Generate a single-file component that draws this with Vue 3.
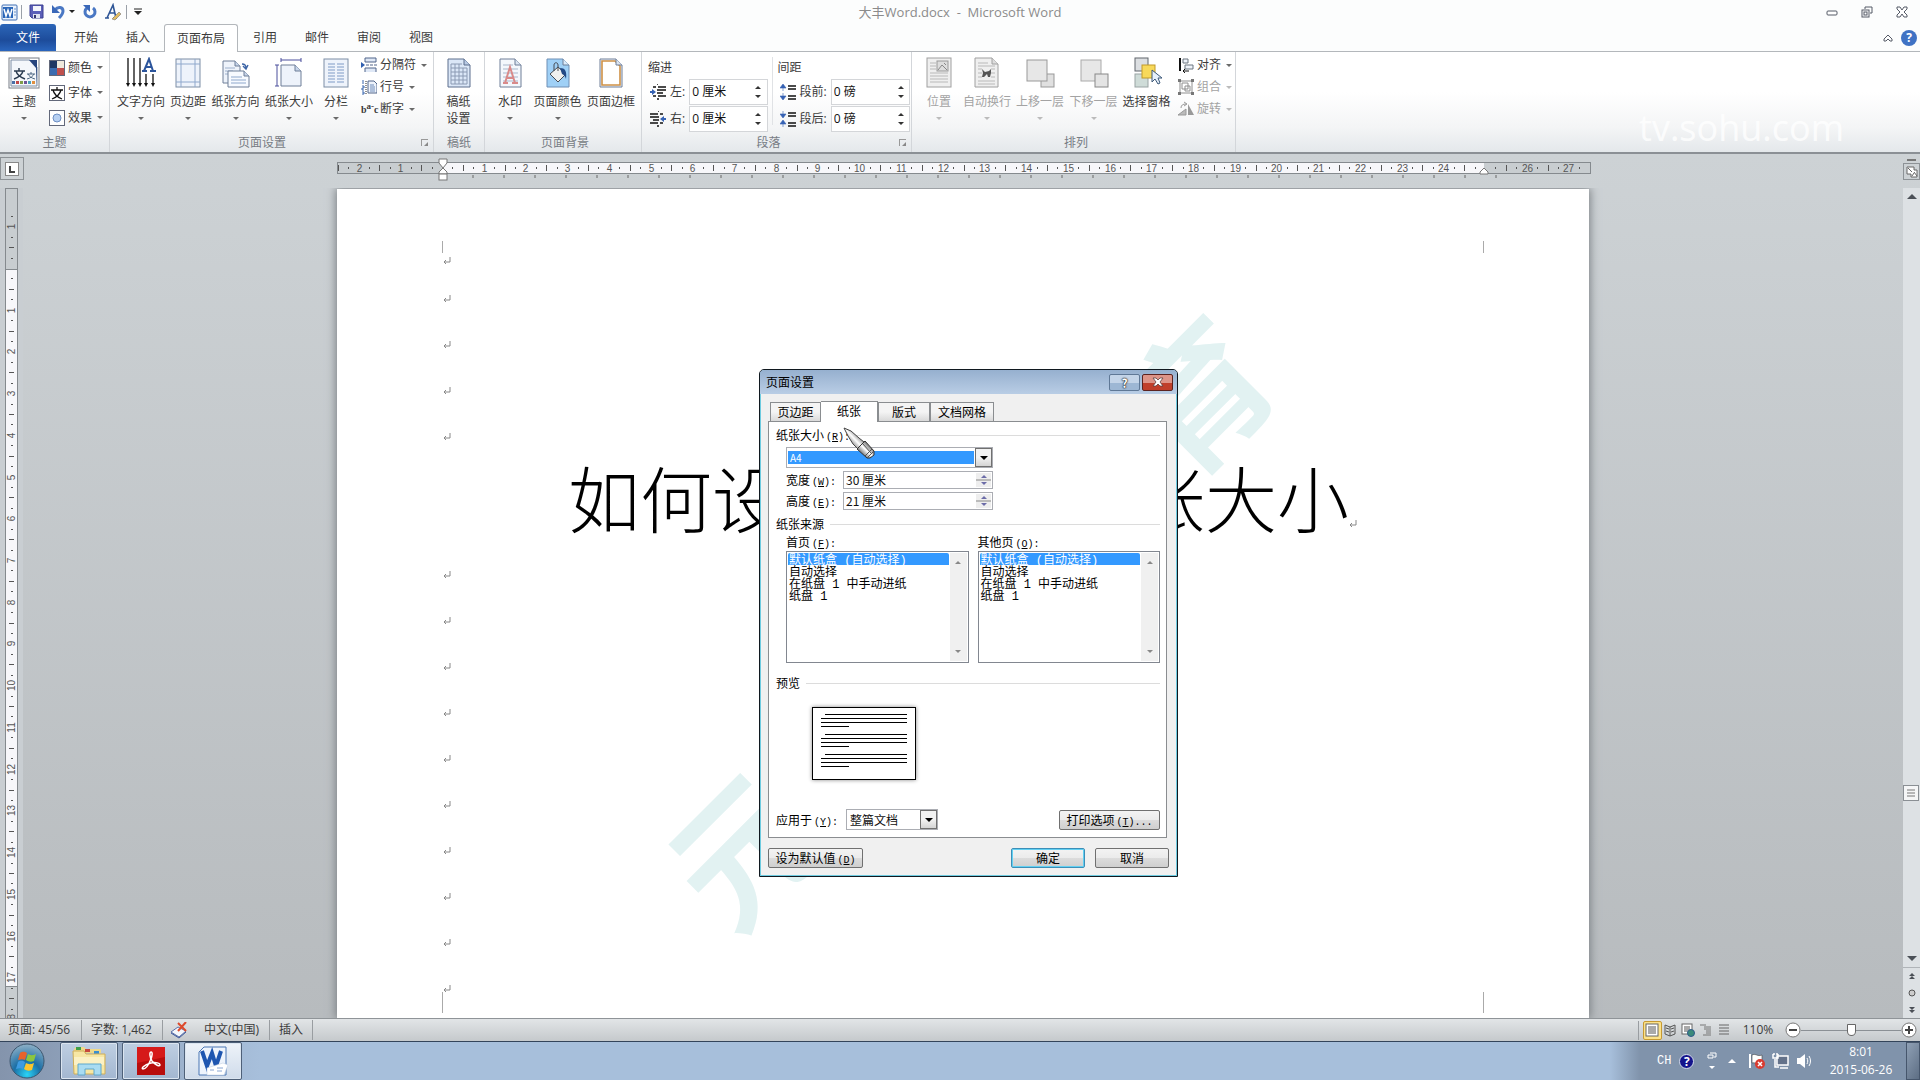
<template>
  <div class="app">
    <header class="title-bar">
      <div class="quick">
        <svg width="17" height="17" viewBox="0 0 17 17">
          <rect x="1" y="1" width="15" height="15" rx="1" fill="#eaf2fc" stroke="#3f6fb4" />
          <rect x="2" y="3" width="10" height="11" fill="#2a66b8" />
          <path d="M3 5l2 7 2-6 2 6 2-7" fill="none" stroke="#fff" stroke-width="1.5" />
          <path d="M13 5h2M13 8h2M13 11h2" stroke="#6d93c8" />
        </svg>
        <i class="bar"></i>
        <button class="q" aria-label="保存">
          <svg width="16" height="16" viewBox="0 0 16 16">
            <path d="M1 1h13v13H3l-2-2z" fill="#5b5fb8" stroke="#3b3f90" />
            <rect x="4" y="2" width="8" height="5" fill="#f3f5fb" />
            <rect x="4" y="10" width="7" height="4" fill="#dfe2f0" />
            <rect x="5" y="11" width="2" height="3" fill="#33366e" />
          </svg>
        </button>
        <button class="q undo" aria-label="撤消">
          <svg width="24" height="16" viewBox="0 0 24 16">
            <path d="M4 6c3-4 8-3 8 1 0 3-2 5-4 7" fill="none" stroke="#4a78c4" stroke-width="3" />
            <path d="M1 1v8h8z" fill="#3a68b8" />
            <path d="M18 6h6l-3 3z" fill="#222" />
          </svg>
        </button>
        <button class="q" aria-label="恢复">
          <svg width="16" height="16" viewBox="0 0 16 16">
            <path d="M5 4a5 5 0 1 0 6 0" fill="none" stroke="#4a78c4" stroke-width="3" />
            <path d="M1 1h7v7z" fill="#3a68b8" />
          </svg>
        </button>
        <button class="q last" aria-label="格式">
          <svg width="18" height="18" viewBox="0 0 18 18">
            <path d="M1 15h4M9 15h4M3 15L9 2l3 13M5 10h6" fill="none" stroke="#2e5596" stroke-width="1.6" />
            <path d="M8 16l7-7 2 2-6 6z" fill="#e2bd63" stroke="#777" stroke-width=".6" />
          </svg>
        </button>
        <i class="bar"></i>
        <svg width="8" height="8" viewBox="0 0 8 8"><path d="M0 1h8" stroke="#222" /><path d="M0 3h8L4 7z" fill="#222" /></svg>
      </div>
      <h1>大丰Word.docx&nbsp; - &nbsp;Microsoft Word</h1>
      <div class="win">
        <button aria-label="最小化"><svg width="12" height="12" viewBox="0 0 12 12"><rect x="1" y="5" width="10" height="4" rx="1" fill="#fff" stroke="#555a66" /></svg></button>
        <button aria-label="还原"><svg width="12" height="12" viewBox="0 0 12 12"><path d="M4 1h7v6H9M4 3V1" fill="none" stroke="#555a66" /><rect x="1" y="4" width="7" height="7" fill="#fff" stroke="#555a66" /><rect x="3" y="6" width="3" height="3" fill="none" stroke="#555a66" /></svg></button>
        <button aria-label="关闭"><svg width="12" height="12" viewBox="0 0 12 12"><path d="M1 1h3l2 3 2-3h3v2L8 6l3 3v2H8L6 8l-2 3H1V9l3-3-3-3z" fill="#fff" stroke="#555a66" /></svg></button>
      </div>
    </header>

    <nav class="tabs">
      <button class="file">文件</button>
      <button v-for="t in tabs" :key="t" :class="['tab', { active: t === '页面布局' }]">{{ t }}</button>
      <span class="grow"></span>
      <button class="collapse" aria-label="折叠功能区"><svg width="10" height="8" viewBox="0 0 10 8"><path d="M1 5l4-4 4 4v2H7L5 5 3 7H1z" fill="#fff" stroke="#555a66" /></svg></button>
      <button class="help">?</button>
    </nav>

    <section class="ribbon">
      <div class="group g-theme">
        <div class="tools">
          <button class="big w48">
            <svg width="32" height="32" viewBox="0 0 32 32">
              <rect x="1" y="1" width="30" height="30" fill="#fff" stroke="#777d85" />
              <path d="M3 3h19l7 7v19H3z" fill="#f4f7fb" stroke="#7d8ea5" />
              <path d="M21 3h8v26l-1-18z" fill="#28457d" />
              <path d="M6 14h11M11 11v3M8 14c1 4 4 6 9 8M15 14c-1 4-4 6-9 8" fill="none" stroke="#2a3b50" stroke-width="1.4" />
              <path d="M19 17h8M23 15v2M20 17c1 2 3 4 7 5M26 17c-1 2-3 4-7 5" fill="none" stroke="#4a6580" />
              <path d="M4 24h3v3H4z" fill="#4a6fa8" /><path d="M8 24h3v3H8z" fill="#c04848" /><path d="M12 24h3v3h-3z" fill="#7f9d48" /><path d="M16 24h3v3h-3z" fill="#6f5596" /><path d="M20 24h3v3h-3z" fill="#4aa0b8" /><path d="M24 24h3v3h-3z" fill="#e09040" />
            </svg>
            <span>主题</span><i class="arrow"></i>
          </button>
          <div class="smalls loose">
            <button class="small">
              <svg width="16" height="16" viewBox="0 0 16 16"><path d="M0 0h8v8H0z" fill="#1f3864" /><path d="M8 0h8v8H8z" fill="#efe9dc" /><path d="M0 8h8v8H0z" fill="#3b6cb0" /><path d="M8 8h8v8H8z" fill="#c0504d" /><rect x=".5" y=".5" width="15" height="15" fill="none" stroke="#62687a" /></svg>
              颜色<i class="arrow"></i>
            </button>
            <button class="small">
              <svg width="16" height="16" viewBox="0 0 16 16"><rect x=".5" y=".5" width="15" height="15" fill="#fff" stroke="#62687a" /><path d="M2 5h12M8 2v3M4 5c1 4 4 7 9 9M12 5c-1 4-4 7-9 9" fill="none" stroke="#111" stroke-width="1.3" /></svg>
              字体<i class="arrow"></i>
            </button>
            <button class="small">
              <svg width="16" height="16" viewBox="0 0 16 16"><rect x=".5" y=".5" width="15" height="15" fill="#fff" stroke="#62687a" /><circle cx="8" cy="8" r="4" fill="#b7d0f2" stroke="#6d8fc4" /></svg>
              效果<i class="arrow"></i>
            </button>
          </div>
        </div>
        <div class="caption">主题</div>
      </div>

      <div class="group g-setup">
        <div class="tools">
          <button class="big w52">
            <svg width="32" height="32" viewBox="0 0 32 32">
              <path d="M3 1v27M9 1v27M15 1v27M21 17v11M28 17v11" stroke="#111" stroke-width="1.3" />
              <path d="M1 26h4l-2 4zM7 26h4l-2 4zM13 26h4l-2 4zM19 26h4l-2 4zM26 26h4l-2 4z" fill="#111" />
              <path d="M17 14h5M25 14h6M19 14l5-12 4 12M21 10h6" fill="none" stroke="#2c559c" stroke-width="2" />
            </svg>
            <span>文字方向</span><i class="arrow"></i>
          </button>
          <button class="big w42">
            <svg width="32" height="32" viewBox="0 0 32 32"><rect x="4" y="2" width="24" height="28" fill="#eef3fb" stroke="#7d8ea5" /><path d="M9 2v28M23 2v28M4 7h24M4 25h24" stroke="#8fa8cc" /></svg>
            <span>页边距</span><i class="arrow"></i>
          </button>
          <button class="big w53">
            <svg width="32" height="32" viewBox="0 0 32 32"><path d="M3 4h12l5 5v17H3z" fill="#eef3fb" stroke="#6f7f98" /><path d="M15 4v5h5" fill="#c7d5ea" stroke="#6f7f98" /><path d="M5 11h10M5 14h8M5 17h3" stroke="#9db0cc" /><path d="M8 14h16l5 5v11H8z" fill="#f7faff" stroke="#6f7f98" /><path d="M24 14v5h5" fill="#c7d5ea" stroke="#6f7f98" /><path d="M11 20h11M11 23h15M11 26h15" stroke="#8fa8cc" /><path d="M22 7c3 0 4 2 4 4M23 9l3 3 2-4" fill="none" stroke="#3c64a6" stroke-width="1.4" /></svg>
            <span>纸张方向</span><i class="arrow"></i>
          </button>
          <button class="big w54">
            <svg width="32" height="32" viewBox="0 0 32 32"><path d="M8 8h14l6 6v15H8z" fill="#eef3fb" stroke="#6f7f98" /><path d="M22 8v6h6" fill="#c7d5ea" stroke="#6f7f98" /><path d="M8 3h20M8 1v4M28 1v4M4 8v21M2 8h4M2 29h4" stroke="#4a4f9c" /></svg>
            <span>纸张大小</span><i class="arrow"></i>
          </button>
          <button class="big w40">
            <svg width="32" height="32" viewBox="0 0 32 32"><rect x="4" y="2" width="24" height="28" fill="#eef3fb" stroke="#7d8ea5" /><path v-for="n in 7" :key="n" :d="`M8 ${4 + n * 3}h7M17 ${4 + n * 3}h7`" stroke="#7f9bc6" /></svg>
            <span>分栏</span><i class="arrow"></i>
          </button>
          <div class="smalls">
            <button class="small">
              <svg width="16" height="16" viewBox="0 0 16 16"><path d="M4 1h11v4H4zM4 15v-4h11v4" fill="#dfe8f6" stroke="#51658a" /><path d="M5 8h11" stroke="#51658a" stroke-dasharray="3 1" /><path d="M0 5l4 3-4 3z" fill="#2f5fb0" /></svg>
              分隔符<i class="arrow"></i>
            </button>
            <button class="small">
              <svg width="16" height="16" viewBox="0 0 16 16"><path d="M2 1v4M1 7h2v2H1v2h2M1 13h2v2H1" fill="none" stroke="#3562ac" /><path d="M5 2v13" stroke="#222" stroke-dasharray="1 1" /><path d="M7 2h6l3 3v9H7z" fill="#eef3fb" stroke="#51658a" /><path d="M9 6h4M9 8h5M9 10h5M9 12h5" stroke="#6f8cba" /></svg>
              行号<i class="arrow"></i>
            </button>
            <button class="small">
              <span class="hyph">b<sup>a-</sup>c</span>
              断字<i class="arrow"></i>
            </button>
          </div>
        </div>
        <div class="caption">页面设置<i class="launch"></i></div>
      </div>

      <div class="group g-grid">
        <div class="tools">
          <button class="big w49">
            <svg width="32" height="32" viewBox="0 0 32 32"><path d="M5 2h16l6 6v22H5z" fill="#dbe7f7" stroke="#5d6f8d" /><path d="M21 2v6h6" fill="#b9cbe5" stroke="#5d6f8d" /><path d="M8 7h11M8 11h16M8 15h16M8 19h16M8 23h16M8 27h16M8 7v20M12 7v20M16 7v20M20 11v16M24 11v16" stroke="#8b9ab3" /></svg>
            <span>稿纸<br>设置</span>
          </button>
        </div>
        <div class="caption">稿纸</div>
      </div>

      <div class="group g-back">
        <div class="tools">
          <button class="big w42">
            <svg width="32" height="32" viewBox="0 0 32 32"><path d="M6 2h15l6 6v22H6z" fill="#f4f7fc" stroke="#6f7f98" /><path d="M21 2v6h6" fill="#dbe4f1" stroke="#6f7f98" /><path d="M9 8h10M9 12h15M9 16h15M9 20h15M9 24h15" stroke="#a9b7cc" /><path d="M9 26h5M18 26h6M11 26l5-16 5 16M13 21h6" fill="none" stroke="#d98a8a" stroke-width="2" /></svg>
            <span>水印</span><i class="arrow"></i>
          </button>
          <button class="big w53">
            <svg width="32" height="32" viewBox="0 0 32 32"><path d="M5 2h16l6 6v22H5z" fill="#9fd0f6" stroke="#6f8fb5" /><path d="M21 2v6h6" fill="#dcebf9" stroke="#6f7f98" /><path d="M8 17l8-7 8 7-8 8z" fill="#f0f0ee" stroke="#474b52" /><path d="M12 14V8c0-3 4-3 4 0v6" fill="none" stroke="#474b52" /><path d="M18 11c5 0 7 3 6 11-1-3-2-4-4-5z" fill="#234a86" /></svg>
            <span>页面颜色</span><i class="arrow"></i>
          </button>
          <button class="big w54">
            <svg width="32" height="32" viewBox="0 0 32 32"><path d="M5 2h16l6 6v22H5z" fill="#eef3fb" stroke="#6f7f98" /><path d="M7 4h13l5 5v19H7z" fill="#fff" stroke="#cf9145" stroke-width="1.6" /><path d="M21 2v6h6" fill="#dbe4f1" stroke="#6f7f98" /></svg>
            <span>页面边框</span>
          </button>
        </div>
        <div class="caption">页面背景</div>
      </div>

      <div class="group g-para">
        <div class="tools">
          <div class="measures indent">
            <div class="head">缩进</div>
            <div v-for="m in indents" :key="m.label" class="measure">
              <svg width="16" height="16" viewBox="0 0 16 16">
                <g :transform="m.flip ? 'matrix(-1 0 0 1 16 0)' : ''">
                  <path d="M3 3h3M8 3h8M7 6h9M7 9h6M3 12h3M8 12h8M7 15h2M7 0h1" stroke="#111" stroke-width="1.5" />
                  <path d="M0 7h2V5l4 3-4 3V9H0z" fill="#3562b4" />
                </g>
              </svg>
              <label :for="m.id">{{ m.label }}</label>
              <div class="spin"><input :id="m.id" v-model="m.value"><span class="steps"><button aria-label="增大"></button><button class="down" aria-label="减小"></button></span></div>
            </div>
          </div>
          <div class="measures spacing">
            <div class="head">间距</div>
            <div v-for="m in spacings" :key="m.label" class="measure">
              <svg width="16" height="16" viewBox="0 0 16 16">
                <path d="M8 2h8M8 5h8M8 12h8M8 15h8" stroke="#111" stroke-width="1.3" />
                <path v-if="m.flip" d="M3 0v3M3 16v-3M0 3h6L3 7zM0 13h6l-3-4z" fill="#3562b4" stroke="#3562b4" stroke-width=".6" />
                <path v-else d="M3 4v3M3 9v3M0 4h6L3 0zM0 12h6l-3 4z" fill="#3562b4" stroke="#3562b4" stroke-width=".6" />
              </svg>
              <label :for="m.id">{{ m.label }}</label>
              <div class="spin"><input :id="m.id" v-model="m.value"><span class="steps"><button aria-label="增大"></button><button class="down" aria-label="减小"></button></span></div>
            </div>
          </div>
        </div>
        <div class="caption">段落<i class="launch"></i></div>
      </div>

      <div class="group g-arrange">
        <div class="tools">
          <button class="big w44" disabled>
            <svg width="32" height="32" viewBox="0 0 32 32"><rect x="4" y="1" width="24" height="29" fill="#efefef" stroke="#a0a0a0" /><path d="M7 6h6M7 9h6M7 12h6M7 16h18M7 19h18M7 22h18M7 25h18" stroke="#b9b9b9" /><rect x="14" y="4" width="11" height="10" fill="#ddd" stroke="#999" /><path d="M15 13l4-5 5 5M21 6l2 2" fill="none" stroke="#888" /></svg>
            <span>位置</span><i class="arrow"></i>
          </button>
          <button class="big w52" disabled>
            <svg width="32" height="32" viewBox="0 0 32 32"><path d="M4 1h17l6 6v23H4z" fill="#efefef" stroke="#a0a0a0" /><path d="M21 1v6h6" fill="#ddd" stroke="#a0a0a0" /><path d="M7 6h10M7 9h17M7 12h4M20 12h4M7 16h4M20 16h4M7 20h4M20 20h4M7 24h17M7 27h17" stroke="#b9b9b9" /><path d="M11 12l3 3 4-1 2-2v4l-1 4h-2l-1-3-3 3h-2l1-4z" fill="#555" /></svg>
            <span>自动换行</span><i class="arrow"></i>
          </button>
          <button class="big w54" disabled>
            <svg width="32" height="32" viewBox="0 0 32 32"><rect x="17" y="17" width="13" height="13" fill="#e0e0e0" stroke="#999" /><rect x="3" y="3" width="20" height="21" fill="#e7e7e7" stroke="#999" /></svg>
            <span>上移一层</span><i class="arrow"></i>
          </button>
          <button class="big w53" disabled>
            <svg width="32" height="32" viewBox="0 0 32 32"><rect x="3" y="3" width="20" height="21" fill="#e7e7e7" stroke="#aaa" /><rect x="17" y="17" width="13" height="13" fill="#e4e4e4" stroke="#888" /></svg>
            <span>下移一层</span><i class="arrow"></i>
          </button>
          <button class="big w53">
            <svg width="32" height="32" viewBox="0 0 32 32"><rect x="4" y="1" width="13" height="13" fill="#dcdfe2" stroke="#61666c" /><rect x="4" y="17" width="13" height="13" fill="#cfdcd8" stroke="#9aa4a4" /><rect x="11" y="8" width="13" height="13" fill="#f8d95a" stroke="#c19a2a" /><path d="M21 13v12l3-3 3 5 2-1-2-5h4z" fill="#e6f0fb" stroke="#3c5878" /></svg>
            <span>选择窗格</span>
          </button>
          <div class="smalls">
            <button class="small"><svg width="16" height="16" viewBox="0 0 16 16"><path d="M2 1v13" stroke="#111" stroke-width="2" /><path d="M5 2h5v4H5zM7 8h8v4H7z" fill="#eef2f8" stroke="#6d7680" /><path d="M5 14h6M7 12l-2 2 2 2" fill="none" stroke="#111" /></svg>对齐<i class="arrow"></i></button>
            <button class="small" disabled><svg width="16" height="16" viewBox="0 0 16 16"><path d="M2 2h12v12H2zM4 4h6v6H4zM7 7h5v5H7z" fill="none" stroke="#8f8f8f" /><path d="M0 0h3v3H0zM13 0h3v3h-3zM0 13h3v3H0zM13 13h3v3h-3z" fill="#777" /></svg>组合<i class="arrow"></i></button>
            <button class="small" disabled><svg width="16" height="16" viewBox="0 0 16 16"><path d="M0 14h8V8z" fill="#bbb" stroke="#999" /><path d="M10 14h6L10 3z" fill="#999" /><path d="M3 7c0-3 2-4 5-4M6 1l3 2-3 2" fill="none" stroke="#999" /></svg>旋转<i class="arrow"></i></button>
          </div>
        </div>
        <div class="caption">排列</div>
      </div>
      <div class="brand">tv.sohu.com</div>
    </section>

    <main class="workspace">
      <div class="corner"><button aria-label="制表符"><svg width="12" height="12" viewBox="0 0 12 12"><path d="M4 3v6h5" fill="none" stroke="#444" stroke-width="2" /></svg></button></div>
      <div class="ruler-row">
        <svg class="ruler" width="1254" height="24" viewBox="0 0 1254 24">
          <rect x=".5" y="5.500" width="1253" height="11" fill="#c8cdd0" stroke="#858a8e" />
          <rect x="106" y="6" width="1041" height="10" fill="#f7f7fa" />
          <template v-for="n in 120" :key="n">
            <path v-if="hTick(n).kind === 'half'" :d="`M${hTick(n).x} 8v6`" stroke="#555" />
            <path v-if="hTick(n).kind === 'dot'" :d="`M${hTick(n).x} 10v2`" stroke="#555" />
            <text v-if="hTick(n).kind === 'num'" :x="hTick(n).x" y="15" text-anchor="middle">{{ hTick(n).text }}</text>
          </template>
          <path v-for="n in 34" :key="'t' + n" :d="`M${105 + n * 31} 18v3`" stroke="#666" />
          <path d="M102 2h8v4l-4 5-4-5zM102 17v-2l4-4 4 4v2z" fill="#fff" stroke="#777" />
          <rect x="102" y="17" width="8" height="6" fill="#fff" stroke="#777" />
          <path d="M1143 17v-2l4-4 4 4v2z" fill="#fff" stroke="#777" />
        </svg>
      </div>
      <div class="split">
        <i></i>
        <button aria-label="标尺"><svg width="14" height="14" viewBox="0 0 14 14"><path d="M2 2h7v3h3v7H6V9H2z" fill="#fff" stroke="#666" /><path d="M3 3l4 4M9 7l3 4M7 11l2-3" stroke="#666" /></svg></button>
      </div>

      <div class="side">
        <svg class="v-ruler" width="18" height="834" viewBox="0 0 18 834">
          <rect x="5.500" y=".5" width="12" height="840" fill="#c8cdd0" stroke="#858a8e" />
          <rect x="6" y="82" width="11" height="716" fill="#f7f7fa" />
          <path d="M6 81.500h11M6 798.500h11" stroke="#858a8e" />
          <template v-for="n in 80" :key="n">
            <path v-if="vTick(n).kind === 'half'" :d="`M9 ${vTick(n).y}h5`" stroke="#555" />
            <path v-if="vTick(n).kind === 'dot'" :d="`M11 ${vTick(n).y}h2`" stroke="#555" />
            <text v-if="vTick(n).kind === 'num'" text-anchor="middle" :transform="`translate(15 ${vTick(n).y}) rotate(-90)`">{{ vTick(n).text }}</text>
          </template>
        </svg>
      </div>
      <div class="canvas">
        <article class="page">
          <div class="mark-text" aria-hidden="true"><span>元</span><span>育</span></div>
          <i class="crop tl"></i><i class="crop tr"></i><i class="crop bl"></i><i class="crop br"></i>
          <p class="first"><svg class="ret" viewBox="0 0 8 8"><path d="M7 0v5H1M3 3L1 5l2 2" /></svg></p>
          <p v-for="n in 4" :key="n"><svg class="ret" viewBox="0 0 8 8"><path d="M7 0v5H1M3 3L1 5l2 2" /></svg></p>
          <h2><span>如何设</span><span>张大小<svg class="ret" viewBox="0 0 8 8"><path d="M7 0v5H1M3 3L1 5l2 2" /></svg></span></h2>
          <p v-for="n in 10" :key="'b' + n"><svg class="ret" viewBox="0 0 8 8"><path d="M7 0v5H1M3 3L1 5l2 2" /></svg></p>
        </article>
      </div>
      <div class="scroll">
        <button aria-label="向上"><svg width="10" height="6" viewBox="0 0 10 6"><path d="M0 5h10L5 0z" fill="#4b5057" /></svg></button>
        <div class="track"><div class="thumb"><svg width="10" height="10" viewBox="0 0 10 10"><path d="M1 2h8M1 5h8M1 8h8" stroke="#777" /></svg></div></div>
        <button aria-label="向下"><svg width="10" height="6" viewBox="0 0 10 6"><path d="M0 0h10L5 5z" fill="#4b5057" /></svg></button>
        <button class="sep" aria-label="上一页"><svg width="8" height="8" viewBox="0 0 8 8"><path d="M1 4h6L4 1zM1 7h6L4 4z" fill="#4b5057" /></svg></button>
        <button aria-label="选择浏览对象"><svg width="8" height="8" viewBox="0 0 8 8"><circle cx="4" cy="4" r="3" fill="#ccc" stroke="#555" /></svg></button>
        <button aria-label="下一页"><svg width="8" height="8" viewBox="0 0 8 8"><path d="M1 1h6L4 4zM1 4h6L4 7z" fill="#4b5057" /></svg></button>
      </div>
    </main>

    <footer class="status">
      <span class="cell c1">页面: 45/56</span>
      <span class="cell c2">字数: 1,462</span>
      <span class="cell c3">
        <svg width="17" height="17" viewBox="0 0 17 17"><path d="M0 10l7-5 8 4-7 6z" fill="#f4f6fb" stroke="#5a6fa8" /><path d="M0 11l8 5 7-6" fill="none" stroke="#3f5a9c" /><path d="M7 1l8 8M15 0L7 9" stroke="#dd4a2c" stroke-width="2" /></svg>
        中文(中国)
      </span>
      <span class="cell c4">插入</span>
      <span class="grow"></span>
      <div class="views">
        <button class="on" aria-label="页面视图"><svg width="14" height="14" viewBox="0 0 14 14"><rect x="1" y="1" width="12" height="12" fill="#fff" stroke="#666" /><path d="M3 4h8M3 6h8M3 8h8M3 10h8" stroke="#555" /></svg></button>
        <button aria-label="阅读版式"><svg width="14" height="14" viewBox="0 0 14 14"><path d="M2 2l5 2 5-2v9l-5 2-5-2zM7 4v9M3 5l3 1M3 8l3 1M8 6l3-1M8 9l3-1" fill="none" stroke="#555" /></svg></button>
        <button aria-label="Web 版式"><svg width="14" height="14" viewBox="0 0 14 14"><rect x="1" y="1" width="10" height="10" fill="#fff" stroke="#666" /><path d="M3 4h6M3 6h6M3 8h4" stroke="#555" /><circle cx="10" cy="10" r="3.500" fill="#3b8a7a" stroke="#2f5a8a" /></svg></button>
        <button aria-label="大纲视图"><svg width="14" height="14" viewBox="0 0 14 14"><path d="M1 2h6M5 4h7M5 6h7M7 8h5M7 10h5M4 12h8" stroke="#777" /></svg></button>
        <button aria-label="草稿"><svg width="14" height="14" viewBox="0 0 14 14"><path d="M2 2h10M2 5h10M2 8h10M2 11h10" stroke="#666" /></svg></button>
      </div>
      <span class="zoom">110%</span>
      <button class="round" aria-label="缩小"><svg width="16" height="16" viewBox="0 0 16 16"><circle cx="8" cy="8" r="7" fill="#fff" stroke="#777" /><path d="M4 8h8" stroke="#444" stroke-width="2" /></svg></button>
      <input v-model="zoom" class="slider" type="range" min="0" max="100" aria-label="缩放">
      <button class="round" aria-label="放大"><svg width="16" height="16" viewBox="0 0 16 16"><circle cx="8" cy="8" r="7" fill="#fff" stroke="#777" /><path d="M4 8h8M8 4v8" stroke="#444" stroke-width="2" /></svg></button>
    </footer>

    <div class="taskbar">
      <button class="start" aria-label="开始">
        <svg width="36" height="36" viewBox="0 0 36 36">
          <defs>
            <radialGradient id="orb" cx=".5" cy=".9" r=".9"><stop offset="0" stop-color="#2ad4f6" /><stop offset=".45" stop-color="#1b6fa6" /><stop offset="1" stop-color="#8fb0c6" /></radialGradient>
          </defs>
          <circle cx="18" cy="18" r="17" fill="url(#orb)" stroke="#3c566e" />
          <path d="M11 10c3-2 5-1 7 0l-2 7c-2-1-4-1-7 0z" fill="#e8632c" />
          <path d="M19 11c2 1 4 2 8 0l-2 7c-3 1-5 1-8-1z" fill="#8cc63e" />
          <path d="M9 19c3-2 5-1 7 0l-2 7c-2-1-4-1-7 0z" fill="#3d9be0" />
          <path d="M17 20c2 1 4 2 8 0l-2 7c-3 1-5 1-8-1z" fill="#fbc52d" />
        </svg>
      </button>
      <button class="task" aria-label="资源管理器">
        <svg width="34" height="32" viewBox="0 0 34 32">
          <path d="M2 4l2-2h8l2 2h15v4H2z" fill="#efd98a" /><path d="M4 2h5v3H4z" fill="#3fa04a" /><path d="M13 4h5v3h-5z" fill="#c8483c" /><path d="M22 6h5v3h-5z" fill="#3a8ed0" />
          <path d="M1 6h11l2 3h19v20H2z" fill="#f7e7a4" stroke="#cfae58" /><path d="M2 12h30v8H2z" fill="#fbf1c4" />
          <path d="M6 30V19h23v11h-7v-6h-9v6z" fill="#a9dcf2" stroke="#5fa8cc" />
        </svg>
      </button>
      <button class="task" aria-label="PDF 阅读器">
        <svg width="28" height="28" viewBox="0 0 28 28"><rect width="28" height="28" fill="#b80d0d" /><path d="M0 0h28v10L0 16z" fill="#d61a1a" /><path d="M14 5c2 0 1 4 0 7-2 5-5 10-8 10-2 0 0-4 8-6 5-1 9 0 9 2s-5 0-8-4c-2-3-3-9-1-9z" fill="none" stroke="#fff" stroke-width="1.500" /></svg>
      </button>
      <button class="task front" aria-label="Word">
        <svg width="30" height="30" viewBox="0 0 30 30"><path d="M6 1h22v28H1V6z" fill="#eef4fc" stroke="#4b76b4" /><path d="M4 5l5 15 5-13 4 13 5-15" fill="none" stroke="#1e56b0" stroke-width="4" /><path d="M9 22l16-5 5 2-4 10H9z" fill="#fff" stroke="#b9c8de" stroke-width=".5" /><path d="M12 24h4M19 22h6M19 25h5" stroke="#8aa6d2" /></svg>
      </button>
      <span class="grow"></span>
      <div class="tray">
        <span class="lang">CH</span>
        <span class="ask">?</span>
        <svg class="t1" width="10" height="18" viewBox="0 0 10 18"><path d="M3 1h6v4H7M1 3h5v3H1z" fill="none" stroke="#fff" /><path d="M2 14h6l-3 3z" fill="#fff" /></svg>
        <svg class="t2" width="8" height="6" viewBox="0 0 8 6"><path d="M0 5h8L4 1z" fill="#fff" /></svg>
        <svg class="t3" width="18" height="18" viewBox="0 0 18 18"><path d="M2 2v14" stroke="#fff" stroke-width="2" /><path d="M4 3c4-2 5 2 10 0v8c-5 2-6-1-10 0z" fill="#fff" stroke="#444" stroke-width=".6" /><circle cx="12" cy="12" r="5" fill="#d93b30" /><path d="M10 10l4 4M14 10l-4 4" stroke="#fff" stroke-width="1.500" /></svg>
        <svg class="t4" width="18" height="18" viewBox="0 0 18 18"><rect x="5" y="4" width="11" height="9" fill="#64728a" stroke="#fff" stroke-width="1.500" /><path d="M8 16h8M3 7v8h4M1 2v4h5V2M2 1v2M5 1v2" fill="none" stroke="#fff" stroke-width="1.500" /></svg>
        <svg class="t5" width="18" height="18" viewBox="0 0 18 18"><path d="M1 6h3l5-4v14l-5-4H1z" fill="#fff" /><path d="M11 6c1 2 1 4 0 6M13 4c2 3 2 7 0 10" fill="none" stroke="#fff" /></svg>
      </div>
      <div class="clock"><span>8:01</span><span>2015-06-26</span></div>
      <button class="peek" aria-label="显示桌面"></button>
    </div>

    <section class="dialog" role="dialog" aria-labelledby="dlg-title">
      <div class="dlg-head">
        <h3 id="dlg-title">页面设置</h3>
        <button class="dlg-help">?</button>
        <button class="dlg-close" aria-label="关闭"><svg width="12" height="10" viewBox="0 0 12 10"><path d="M1 1h3l2 2 2-2h3L8 5l3 4H8L6 7 4 9H1l3-4z" fill="#fff" stroke="#5d4040" stroke-width=".8" /></svg></button>
      </div>
      <div class="dlg-tabs">
        <button class="m1">页边距</button><button class="m2 on">纸张</button><button class="m3">版式</button><button class="m4">文档网格</button>
      </div>
      <div class="panel">
        <div class="legend"><label for="size">纸张大小<b>(<u>R</u>):</b></label></div>
        <div class="combo size">
          <select id="size"><option>A4</option></select>
          <i class="drop"></i>
        </div>
        <div v-for="d in dims" :key="d.id" class="dim">
          <label :for="d.id">{{ d.label }}<b>(<u>{{ d.key }}</u>):</b></label>
          <div class="dlg-spin"><input :id="d.id" v-model="d.value"><span class="steps"><button aria-label="增大"></button><button class="down" aria-label="减小"></button></span></div>
        </div>
        <div class="legend source">纸张来源</div>
        <div class="lists">
          <div v-for="l in lists" :key="l.id" class="list">
            <label :for="l.id">{{ l.label }}<b>(<u>{{ l.key }}</u>):</b></label>
            <div class="list-box">
              <select :id="l.id" v-model="l.value" size="4">
                <option v-for="t in trays" :key="t">{{ t }}</option>
              </select>
              <span class="list-scroll"><i></i><i class="down"></i></span>
            </div>
          </div>
        </div>
        <div class="legend preview-head">预览</div>
        <div class="preview">
          <svg width="86" height="53" viewBox="0 0 86 53">
            <path v-for="y in [0, 20, 40]" :key="y" :d="`M4 ${y + 0.5}h82M0 ${y + 4.5}h86M0 ${y + 8.5}h86M0 ${y + 12.5}h28`" stroke="#000" />
          </svg>
        </div>
        <div class="apply">
          <label for="apply">应用于<b>(<u>Y</u>):</b></label>
          <div class="combo whole"><select id="apply"><option>整篇文档</option></select><i class="drop"></i></div>
          <span class="grow"></span>
          <button class="btn print">打印选项<b>(<u>T</u>)...</b></button>
        </div>
      </div>
      <div class="dlg-foot">
        <button class="btn default">设为默认值<b>(<u>D</u>)</b></button>
        <span class="grow"></span>
        <button class="btn ok">确定</button>
        <button class="btn cancel">取消</button>
      </div>
      <svg class="pen" width="34" height="34" viewBox="0 0 34 34">
        <defs><linearGradient id="pen" x1="0" y1="1" x2="1" y2="0"><stop offset=".3" stop-color="#8a8a8a" /><stop offset=".5" stop-color="#fff" /><stop offset=".7" stop-color="#888" /></linearGradient></defs>
        <path d="M1 1l7 3 8 7 5 4-6 7-5-5-5-8z" fill="url(#pen)" stroke="#444" />
        <path d="M22 14l9 10v4l-4 3h-3l-10-9z" fill="url(#pen)" stroke="#333" />
        <path d="M20 17l8 9M31 24l-7 7M29 22l-7 7" fill="none" stroke="#555" />
      </svg>
    </section>
  </div>
</template>

<script setup>
import { ref, reactive } from 'vue'

const tabs = ['开始', '插入', '页面布局', '引用', '邮件', '审阅', '视图']

const indents = reactive([
  { id: 'ind-l', label: '左:', value: '0 厘米', flip: false },
  { id: 'ind-r', label: '右:', value: '0 厘米', flip: true }
])
const spacings = reactive([
  { id: 'sp-b', label: '段前:', value: '0 磅', flip: false },
  { id: 'sp-a', label: '段后:', value: '0 磅', flip: true }
])
const dims = reactive([
  { id: 'dim-w', label: '宽度', key: 'W', value: '30 厘米' },
  { id: 'dim-h', label: '高度', key: 'E', value: '21 厘米' }
])
const trays = ['默认纸盒 (自动选择)', '自动选择', '在纸盘 1 中手动进纸', '纸盘 1']
const lists = reactive([
  { id: 'first', label: '首页', key: 'F', value: trays[0] },
  { id: 'other', label: '其他页', key: 'O', value: trays[0] }
])
const zoom = ref(51)

// one centimetre on the ruler
const CM = 41.72

function tick(quarter) {
  const q = Math.abs(quarter) % 4
  if (quarter === 0 || quarter === 100) return 'none'
  if (q === 0) return 'num'
  return q === 2 ? 'half' : 'dot'
}

function hTick(n) {
  const quarter = n - 11
  return {
    x: Math.round(105 + (quarter * CM) / 4) + 0.5,
    kind: quarter > 110 ? 'none' : tick(quarter),
    text: Math.abs(quarter / 4)
  }
}

function vTick(n) {
  const quarter = n - 6
  return {
    y: Math.round(80 + (quarter * CM) / 4) + 0.5,
    kind: tick(quarter),
    text: Math.abs(quarter / 4)
  }
}
</script>

<style>
body {
  overflow: hidden;
}
</style>

<style scoped>
.app {
  position: relative;
  display: flex;
  flex-direction: column;
  height: 100vh;
  font-family: "Open Sans", "Noto Sans CJK SC", sans-serif;
  font-size: 12px;
  line-height: 16px;
  color: #3b3b3b;
  background: #fcfdfd;
}
* {
  box-sizing: border-box;
}
button {
  margin: 0;
  padding: 0;
  border: 0;
  background: none;
  font: inherit;
  color: inherit;
  white-space: nowrap;
}
input,
select {
  margin: 0;
  padding: 0;
  border: 0;
  outline: 0;
  min-width: 0;
  font: inherit;
  color: #111;
  background: #fff;
}
h1,
h2,
h3,
p {
  margin: 0;
  font-weight: normal;
}
svg {
  display: block;
  flex: none;
}
.grow {
  flex: 1;
}

/* title bar */
.title-bar {
  display: grid;
  grid-template-columns: 1fr auto 1fr;
  align-items: center;
  height: 24px;
}
.quick {
  display: flex;
  align-items: center;
  padding-left: 1px;
}
.quick .q {
  margin-right: 6px;
}
.quick .undo {
  margin-right: 7px;
}
.quick .last {
  margin-right: 1px;
}
.bar {
  width: 1px;
  height: 14px;
  margin: 0 7px 0 3px;
  background: #9aa0a8;
}
.title-bar h1 {
  font-size: 13px;
  color: #8b8b8b;
}
.win {
  display: flex;
  justify-content: flex-end;
  gap: 23px;
  padding-right: 12px;
}

/* tabs */
.tabs {
  display: flex;
  align-items: stretch;
  height: 28px;
  border-bottom: 1px solid #b3b7bb;
}
.file {
  width: 56px;
  border-radius: 3px 3px 0 0;
  background: linear-gradient(#2c66b8, #1d4c9b 60%, #2a65bd);
  color: #fff;
}
.tab {
  width: 52px;
  margin-bottom: -1px;
}
.file + .tab {
  margin-left: 4px;
}
.tab.active {
  width: 74px;
  border: 1px solid #b3b7bb;
  border-bottom: 0;
  border-radius: 3px 3px 0 0;
  background: #fff;
}
.tab.active + .tab {
  margin-left: 1px;
}
.collapse {
  margin-right: 8px;
}
.help {
  align-self: center;
  width: 16px;
  height: 16px;
  margin-right: 3px;
  border-radius: 8px;
  background: #3f72c4;
  color: #fff;
  font-weight: bold;
}

/* ribbon */
.ribbon {
  position: relative;
  display: flex;
  height: 102px;
  border-bottom: 2px solid #8b9095;
  background: linear-gradient(#fff 40%, #f4f5f6 75%, #e4e8eb);
}
.group {
  display: flex;
  flex-direction: column;
  flex: none;
  border-right: 1px solid #d3d6da;
}
.g-theme { width: 110px; }
.g-setup { width: 324px; padding-left: 5px; }
.g-grid { width: 51px; }
.g-back { width: 157px; padding-left: 4px; }
.g-para { width: 270px; }
.g-arrange { width: 324px; padding-left: 5px; }
.tools {
  display: flex;
  height: 83px;
  padding-top: 5px;
}
.caption {
  position: relative;
  text-align: center;
  color: #777c84;
}
.g-setup .caption {
  padding-right: 24px;
}
.g-para .caption {
  padding-right: 16px;
}
.launch {
  position: absolute;
  right: 5px;
  top: 4px;
  width: 7px;
  height: 7px;
  border-left: 1px solid #999;
  border-top: 1px solid #999;
}
.launch::after {
  content: "";
  position: absolute;
  right: 0;
  bottom: 0;
  border: 2px solid #888;
  border-left-color: transparent;
  border-top-color: transparent;
}
.big {
  display: flex;
  flex-direction: column;
  align-items: center;
  flex: none;
}
.big span {
  margin-top: 4px;
  line-height: 17px;
}
.w40 { width: 40px; }
.w42 { width: 42px; }
.w44 { width: 44px; }
.w48 { width: 48px; }
.w49 { width: 49px; }
.w52 { width: 52px; }
.w53 { width: 53px; }
.w54 { width: 54px; }
.arrow {
  flex: none;
  border: 3px solid transparent;
  border-top-color: #6a6a6a;
  border-bottom: 0;
}
.big .arrow {
  margin-top: 7px;
}
button:disabled {
  color: #a3a3a3;
}
button:disabled .arrow {
  border-top-color: #bbb;
}
.smalls {
  display: flex;
  flex-direction: column;
  margin: -3px 0 0 5px;
}
.small {
  display: flex;
  align-items: center;
  height: 22px;
  gap: 3px;
}
.smalls.loose {
  margin: -2px 0 0 1px;
}
.loose .small {
  height: 25px;
}
.small .arrow {
  margin-left: 2px;
}
.hyph {
  width: 16px;
  font: bold 10px "Liberation Serif", serif;
}
.hyph sup {
  font-size: 9px;
  line-height: 1px;
}
.measures {
  width: 131px;
  padding: 0 4px 0 6px;
}
.indent {
  margin-bottom: 10px;
  border-right: 1px solid #e0e2e5;
}
.spacing {
  width: 139px;
  padding: 0 1px 0 5px;
}
.head {
  height: 21px;
  line-height: 21px;
}
.measure {
  display: flex;
  align-items: center;
  gap: 4px;
  height: 27px;
}
.measure svg {
  margin-left: 2px;
}
.spin {
  display: flex;
  flex: 1;
  height: 26px;
  border: 1px solid #d4d6d9;
  background: #fff;
}
.spin input {
  flex: 1;
  width: 40px;
  padding-left: 2px;
}
.steps {
  display: flex;
  flex-direction: column;
  justify-content: space-evenly;
  width: 17px;
  align-items: center;
}
.steps button {
  border: 3px solid transparent;
  border-top: 0;
  border-bottom-color: #333;
}
.steps button.down {
  border: 3px solid transparent;
  border-bottom: 0;
  border-top-color: #333;
}
.brand {
  position: absolute;
  right: 76px;
  bottom: 4px;
  font-size: 36px;
  line-height: 40px;
  color: rgba(255, 255, 255, 0.8);
}

/* workspace */
.workspace {
  display: grid;
  grid-template-columns: 23px 1fr 17px;
  grid-template-rows: 34px 1fr;
  flex: 1;
  min-height: 0;
  background: linear-gradient(#cdd2d5, #b7bbbe);
}
.corner {
  padding-top: 3px;
}
.corner button {
  display: flex;
  align-items: center;
  justify-content: center;
  width: 24px;
  height: 23px;
  border: 1px solid #8d9296;
}
.corner svg {
  background: #fff;
  outline: 1px solid #888;
}
.ruler-row {
  display: flex;
  justify-content: center;
  padding: 3px 0 0 2px;
}
text {
  font: 10px "Liberation Sans", sans-serif;
  fill: #555;
}
.split {
  display: flex;
  flex-direction: column;
  align-items: center;
  padding-top: 5px;
}
.split i {
  width: 9px;
  height: 2px;
  margin-bottom: 2px;
  background: #777;
}
.split button {
  width: 17px;
  height: 17px;
  padding: 1px;
  border: 1px solid #8d9296;
}
.side {
  overflow: hidden;
  background: #c9ced2;
}
.canvas {
  display: flex;
  justify-content: center;
  overflow: hidden;
}
.page {
  position: relative;
  width: 1252px;
  overflow: hidden;
  margin-top: 1px;
  padding: 57px 0 0 106px;
  background: #fff;
  box-shadow: 0 0 9px 1px #777c80;
}
.page p,
.page h2 {
  position: relative;
}
.page p {
  display: flex;
  align-items: center;
  height: 46px;
}
.page .first {
  height: 30px;
}
.page h2 {
  display: flex;
  justify-content: space-between;
  width: 789px;
  height: 92px;
  margin-left: 125px;
  padding-bottom: 12px;
  font: 300 72px/88px "Noto Sans CJK SC", sans-serif;
  color: #000;
}
.page h2 span {
  display: flex;
  align-items: flex-end;
}
.page h2 .ret {
  margin-bottom: 12px;
}
.ret {
  width: 8px;
  height: 8px;
  fill: none;
  stroke: #888;
}
.crop {
  position: absolute;
  width: 1px;
  background: #aaa;
  height: 12px;
}
.tl { left: 105px; top: 52px; }
.tr { right: 105px; top: 52px; }
.bl { left: 105px; bottom: 5px; height: 21px; }
.br { right: 105px; bottom: 5px; height: 21px; }
.mark-text {
  position: absolute;
  display: flex;
  justify-content: space-between;
  width: 782px;
  left: 237px;
  top: 338px;
  font: bold 142px/180px "Noto Sans CJK SC", sans-serif;
  color: #e2f2f2;
  transform: rotate(-45deg);
}
.scroll {
  display: flex;
  flex-direction: column;
  background: #dde1e4;
}
.scroll button {
  display: flex;
  align-items: center;
  justify-content: center;
  height: 17px;
}
.scroll .sep {
  border-top: 1px solid #b0b4b8;
}
.track {
  display: flex;
  flex: 1;
  align-items: flex-end;
  padding-bottom: 149px;
}
.thumb {
  display: flex;
  align-items: center;
  justify-content: center;
  width: 16px;
  height: 16px;
  border: 1px solid #8a8f94;
  background: #f5f6f7;
}

/* status bar */
.status {
  display: flex;
  align-items: center;
  height: 23px;
  border-top: 1px solid #8f9498;
  background: linear-gradient(#e2e5e7, #c5c9cc);
}
.cell {
  display: flex;
  align-items: center;
  height: 20px;
  border-right: 1px solid #999da1;
}
.c1 { width: 82px; padding-left: 8px; }
.c2 { width: 81px; padding-left: 9px; }
.c3 { width: 107px; padding-left: 8px; gap: 16px; }
.c4 { width: 43px; padding-left: 9px; }
.views {
  display: flex;
  padding-left: 4px;
  border-left: 1px solid #999da1;
}
.views button {
  width: 18px;
  height: 19px;
  padding: 1px;
}
.views .on {
  width: 19px;
  border: 1px solid #c79a32;
  border-radius: 2px;
  background: #fce28a;
}
.zoom {
  width: 48px;
  text-align: center;
}
.round {
  margin: 0 3px;
}
.round + .slider {
  margin: 0 -3px;
}
.slider {
  appearance: none;
  width: 100px;
  height: 16px;
  background: linear-gradient(#8b9095, #8b9095) center / 100% 1px no-repeat;
}
.slider::-webkit-slider-thumb {
  appearance: none;
  width: 9px;
  height: 12px;
  border: 1px solid #666;
  border-radius: 1px 1px 5px 5px;
  background: #fff;
}

/* taskbar */
.taskbar {
  display: flex;
  align-items: stretch;
  gap: 4px;
  height: 39px;
  border-top: 1px solid #33445a;
  background: linear-gradient(to right, #8494ac, #a7bfdb 260px, #a7bfdb calc(100% - 310px), #8093ab calc(100% - 280px));
}
.start {
  display: flex;
  align-items: center;
  width: 56px;
  padding-left: 9px;
}
.task {
  display: flex;
  align-items: center;
  justify-content: center;
  width: 58px;
  border: 1px solid #4e6078;
  border-radius: 2px;
  background: linear-gradient(#bfcfe2, #a3b7d0);
  box-shadow: inset 0 0 0 1px #dbe5f0;
}
.task.front {
  background: linear-gradient(#eef3f9, #cfdbea);
}
.tray {
  display: flex;
  align-items: center;
  width: 159px;
  color: #fff;
}
.lang {
  font: 12px "Liberation Mono", monospace;
  margin-right: 8px;
}
.ask {
  width: 15px;
  height: 15px;
  border: 1px solid #d6deec;
  border-radius: 8px;
  background: #14148c;
  line-height: 13px;
  text-align: center;
  font-weight: bold;
}
.t1 { margin: 0 11px 0 13px; }
.t2 { margin-right: 12px; }
.t3,
.t4 { margin-right: 6px; }
.clock {
  display: flex;
  flex-direction: column;
  justify-content: space-evenly;
  align-items: center;
  width: 82px;
  color: #fff;
}
.peek {
  width: 14px;
  border: 1px solid #46566c;
  background: linear-gradient(120deg, #8fa0b5, #5d6e84);
}

/* dialog */
.dialog {
  position: absolute;
  left: 759px;
  top: 369px;
  width: 419px;
  padding: 0 8px 8px;
  border: 1px solid #10181f;
  border-radius: 5px 5px 0 0;
  background: #f0f0f0;
  box-shadow: inset 0 0 0 1px #6ecbe0;
  font-family: "Noto Sans CJK SC", sans-serif;
  color: #000;
}
.dialog b {
  margin-left: 2px;
  font: 10px "Liberation Mono", monospace;
}
.dlg-head {
  display: flex;
  align-items: center;
  gap: 2px;
  height: 24px;
  margin: 0 -8px;
  padding: 0 4px 0 6px;
  border-radius: 4px 4px 0 0;
  background: linear-gradient(#96b0cf, #b9cde5);
}
.dlg-head h3 {
  flex: 1;
  font-size: 12px;
}
.dlg-head button {
  width: 31px;
  height: 17px;
  border: 1px solid #5f7896;
  border-radius: 2px;
  background: linear-gradient(#c3d4e8 50%, #9db7d4 50%);
  line-height: 15px;
  font-weight: bold;
  color: #fff;
  text-shadow: 0 0 1px #222, 0 0 1px #222, 0 0 2px #222;
}
.dlg-head .dlg-close {
  display: flex;
  align-items: center;
  justify-content: center;
  border-color: #5c2320;
  background: linear-gradient(#dd9488 50%, #c03f2b 50%);
}
.dlg-tabs {
  display: flex;
  align-items: flex-end;
  height: 27px;
  padding-left: 2px;
}
.dlg-tabs button {
  height: 19px;
  border: 1px solid #8a8d90;
  border-bottom: 0;
  background: linear-gradient(#f4f4f4 50%, #d9d9d9);
}
.dlg-tabs .m1 { width: 51px; }
.dlg-tabs .m2 { width: 57px; }
.dlg-tabs .m3 { width: 52px; }
.dlg-tabs .m4 { width: 64px; }
.dlg-tabs .on {
  height: 21px;
  margin-bottom: -1px;
  padding-bottom: 2px;
  background: #fff;
  border-left: 0;
  z-index: 1;
}
.panel {
  padding: 3px 6px 7px 7px;
  margin-right: 2px;
  border: 1px solid #8a8d90;
  background: #fff;
}
.legend {
  display: flex;
  align-items: center;
  gap: 6px;
  height: 20px;
}
.legend::after {
  content: "";
  flex: 1;
  height: 1px;
  background: #dcdcdc;
}
.combo {
  display: flex;
  height: 21px;
  border: 1px solid #abadb3;
}
.combo select {
  appearance: none;
  flex: 1;
  padding-left: 3px;
}
.drop {
  display: flex;
  align-items: center;
  justify-content: center;
  width: 17px;
  border: 1px solid #707070;
  background: linear-gradient(#f2f2f2 50%, #d4d4d4);
  pointer-events: none;
}
.drop::after {
  content: "";
  border: 4px solid transparent;
  border-top-color: #000;
  border-bottom: 0;
}
.size {
  width: 207px;
  margin: 2px 0 3px 10px;
}
.size select {
  margin: 3px 1px;
  padding-left: 2px;
  background: #39f;
  color: #fff;
  line-height: 13px;
  font-size: 10px;
}
.dim {
  display: flex;
  align-items: center;
  width: 207px;
  height: 18px;
  margin: 0 0 3px 10px;
}
.dim label {
  width: 57px;
}
.dlg-spin {
  display: flex;
  flex: 1;
  height: 18px;
  border: 1px solid #abadb3;
}
.dlg-spin input {
  flex: 1;
  width: 60px;
  padding-left: 2px;
  word-spacing: normal;
}
.dlg-spin .steps {
  justify-content: space-between;
  width: 15px;
  margin: 1px;
  padding: 2px 0;
  background: linear-gradient(#eee 45%, #bbb 45%, #bbb 55%, #eee 55%);
}
.dlg-spin .steps button {
  border-bottom-color: #6c6ca8;
}
.dlg-spin .steps .down {
  border-top-color: #6c6ca8;
}
.source {
  margin-top: 4px;
}
.lists {
  display: flex;
  gap: 9px;
  padding-left: 10px;
}
.list {
  flex: 1;
}
.list label {
  display: block;
  height: 17px;
}
.list-box {
  display: flex;
  height: 112px;
  border: 1px solid #828790;
}
.list-box select {
  flex: 1;
  height: 108px;
  margin: 1px 0 0 1px;
  overflow: hidden;
  scrollbar-width: none;
  font-family: "Liberation Mono", "Noto Sans CJK SC", monospace;
}
.list-box option {
  display: flex;
  align-items: center;
  min-height: 0;
  height: 12px;
  padding: 0 1px;
  line-height: 12px;
  color: #000;
}
.list-box option:checked {
  background: linear-gradient(#39f, #39f);
  -webkit-text-fill-color: #fff;
}
.list-scroll {
  display: flex;
  flex-direction: column;
  justify-content: space-between;
  align-items: center;
  width: 17px;
  padding: 8px 0;
  margin: 1px;
  background: #f0f0f0;
}
.list-scroll i {
  border: 3px solid transparent;
  border-bottom-color: #888;
  border-top: 0;
}
.list-scroll .down {
  border: 3px solid transparent;
  border-top-color: #888;
  border-bottom: 0;
}
.preview-head {
  margin-top: 10px;
}
.preview {
  width: 104px;
  height: 73px;
  margin: 14px 0 29px 36px;
  padding: 6px 8px;
  border: 1px solid #000;
  background: #fff;
  box-shadow: 0 0 4px #888;
}
.apply {
  display: flex;
  align-items: center;
}
.apply label {
  width: 70px;
}
.whole {
  width: 92px;
}
.btn {
  height: 20px;
  border: 1px solid #707070;
  border-radius: 2px;
  background: linear-gradient(#f3f3f3, #ebebeb 50%, #dcdcdc 50%, #cfcfcf);
  line-height: 18px;
}
.print {
  width: 101px;
}
.dlg-foot {
  display: flex;
  gap: 10px;
  padding-top: 10px;
}
.default { width: 95px; }
.ok,
.cancel { width: 74px; }
.ok {
  border-color: #3c8fb8;
  box-shadow: inset 0 0 0 1px #62d0f2;
}
.pen {
  position: absolute;
  left: 83px;
  top: 57px;
}
</style>
